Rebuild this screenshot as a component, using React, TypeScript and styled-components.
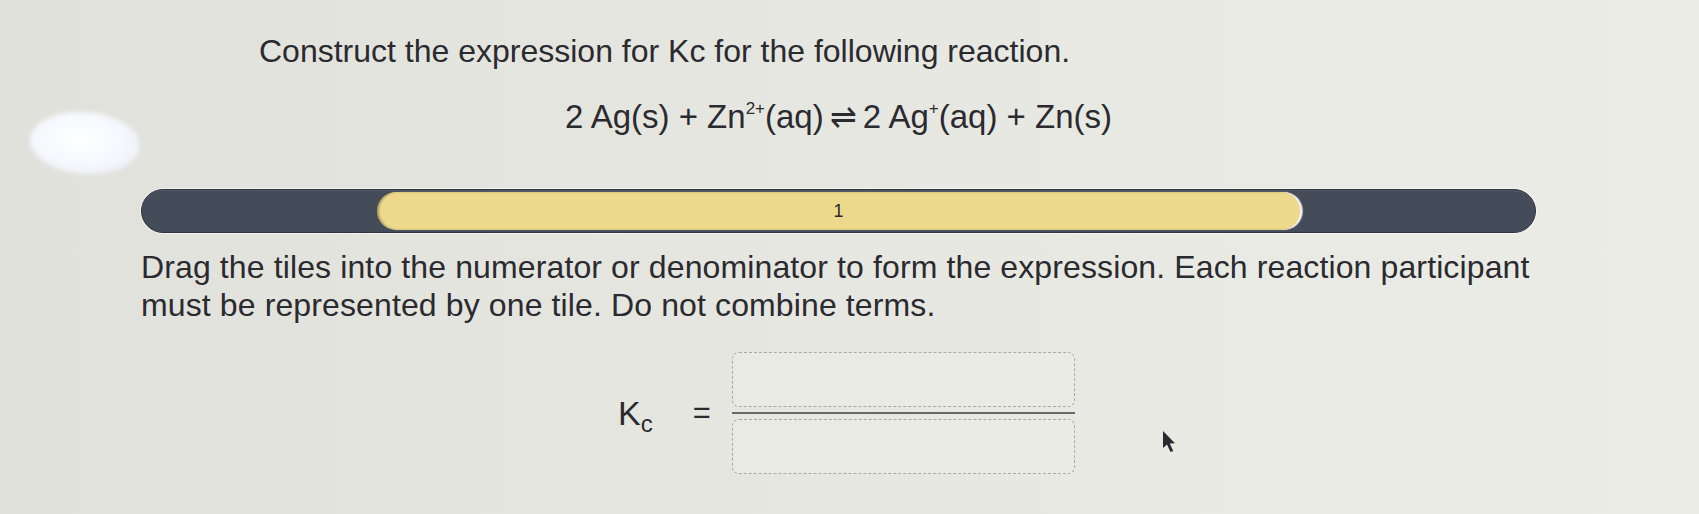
import React from "react";
import styled, { createGlobalStyle } from "styled-components";

const GlobalStyle = createGlobalStyle`
  html, body {
    margin: 0;
    padding: 0;
  }
  body {
    background: #e5e5df;
    font-family: "Liberation Sans", Arial, sans-serif;
    color: #2b2b30;
  }
`;

const Page = styled.div`
  position: relative;
  width: 1699px;
  height: 514px;
  overflow: hidden;
  box-sizing: border-box;
  padding: 32px 0 0 141px;
  background: linear-gradient(90deg, #e1e1db 0%, #e6e6e0 40%, #eaeae5 75%, #ecece7 100%);
`;

const Column = styled.div`
  width: 1395px;
  display: flex;
  flex-direction: column;
`;

const Title = styled.h1`
  margin: 0;
  padding-left: 118px;
  font-size: 32px;
  line-height: 38px;
  font-weight: 400;
  color: #2a2a2f;
`;

const Equation = styled.div`
  margin-top: 29px;
  text-align: center;
  font-size: 33px;
  line-height: 36px;
  color: #2a2a2f;
  sup {
    font-size: 17px;
    line-height: 0;
    vertical-align: 14px;
  }
`;

const Arrows = styled.span`
  display: inline-block;
  margin: 0 6px;
  font-size: 32px;
`;

const ProgressTrack = styled.div`
  margin-top: 54px;
  height: 44px;
  box-sizing: border-box;
  border-radius: 22px;
  background: #444b59;
  border: 1px solid #30353f;
  box-shadow: 0 0 0 1px rgba(255, 255, 255, 0.55), inset 0 1px 1px rgba(255, 255, 255, 0.08);
  display: flex;
  align-items: center;
  padding-left: 235px;
`;

const Segment = styled.div<{ $width: number }>`
  width: ${(p) => p.$width}px;
  height: 38px;
  border-radius: 19px;
  background: #ecd98b;
  box-shadow: inset 2px 0 2px rgba(60, 50, 20, 0.35), 2px 0 0 #f3f2ec, 3px 0 1px #c9c9c4;
  display: flex;
  align-items: center;
  justify-content: center;
  font-size: 18px;
  color: #2a2a2a;
`;

const Instructions = styled.p`
  margin: 15px 0 0;
  font-size: 32px;
  line-height: 38px;
  letter-spacing: 0.12px;
  color: #2a2a2f;
  white-space: nowrap;
`;

const ExpressionRow = styled.div`
  margin-top: 28px;
  padding-left: 477px;
  display: flex;
  align-items: center;
`;

const KcLabel = styled.div`
  font-size: 34px;
  line-height: 36px;
  margin-right: 40px;
  color: #2a2a2f;
  sub {
    font-size: 24px;
    vertical-align: -7px;
    line-height: 0;
  }
`;

const Equals = styled.div`
  font-size: 31px;
  line-height: 36px;
  margin-right: 21px;
  color: #2a2a2f;
`;

const Fraction = styled.div`
  width: 343px;
  display: flex;
  flex-direction: column;
  gap: 5px;
`;

const DropBox = styled.div`
  height: 55px;
  box-sizing: border-box;
  border: 1px dashed #a8a8a4;
  border-radius: 7px;
  background: rgba(240, 240, 236, 0.35);
`;

const FractionLine = styled.div`
  height: 2px;
  background: #66686c;
`;

const Glare = styled.div`
  position: absolute;
  left: 30px;
  top: 112px;
  width: 110px;
  height: 62px;
  border-radius: 50%;
  background: radial-gradient(ellipse at 45% 45%, #ffffff 0%, #f6f8fe 50%, #eef1f8 72%, rgba(230, 230, 224, 0) 100%);
  filter: blur(2px);
  transform: rotate(4deg);
`;

const Cursor = styled.svg`
  position: absolute;
  left: 1161px;
  top: 430px;
`;

export default function App() {
  return (
    <>
      <GlobalStyle />
      <Page>
        <Glare />
        <Column>
          <Title>Construct the expression for Kc for the following reaction.</Title>
          <Equation>
            2 Ag(s) + Zn<sup>2+</sup>(aq)
            <Arrows>⇌</Arrows>2 Ag<sup>+</sup>(aq) + Zn(s)
          </Equation>
          <ProgressTrack>
            <Segment $width={923}>1</Segment>
          </ProgressTrack>
          <Instructions>
            Drag the tiles into the numerator or denominator to form the expression. Each reaction participant
            <br />
            must be represented by one tile. Do not combine terms.
          </Instructions>
          <ExpressionRow>
            <KcLabel>
              K<sub>c</sub>
            </KcLabel>
            <Equals>=</Equals>
            <Fraction>
              <DropBox />
              <FractionLine />
              <DropBox />
            </Fraction>
          </ExpressionRow>
        </Column>
        <Cursor width="16" height="25" viewBox="0 0 16 25">
          <path d="M2 1 L2 18 L6 14.5 L9.5 22 L12.2 21 L8.8 13.6 L14 13.2 Z" fill="#262a33" />
        </Cursor>
      </Page>
    </>
  );
}
